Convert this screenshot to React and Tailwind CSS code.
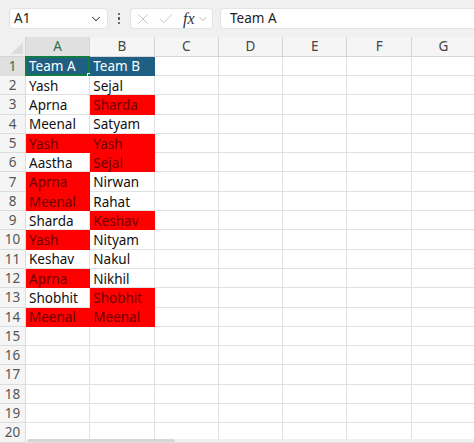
import React from 'react';
import { ChevronDown, X, Check } from 'lucide-react';

const rows = [
  [['Team A', 'h'], ['Team B', 'h']],
  [['Yash'], ['Sejal']],
  [['Aprna'], ['Sharda', 'r']],
  [['Meenal'], ['Satyam']],
  [['Yash', 'r'], ['Yash', 'r']],
  [['Aastha'], ['Sejal', 'r']],
  [['Aprna', 'r'], ['Nirwan']],
  [['Meenal', 'r'], ['Rahat']],
  [['Sharda'], ['Keshav', 'r']],
  [['Yash', 'r'], ['Nityam']],
  [['Keshav'], ['Nakul']],
  [['Aprna', 'r'], ['Nikhil']],
  [['Shobhit'], ['Shobhit', 'r']],
  [['Meenal', 'r'], ['Meenal', 'r']],
];

const cols = ['A', 'B', 'C', 'D', 'E', 'F', 'G'];

const Cell = ({ text, kind, selected }) => {
  let cls = 'border-r border-b border-[#e1e1e1] bg-white text-[#111]';
  if (kind === 'h') cls = 'border-r border-b border-[#1e5f83] bg-[#1e5f83] text-white';
  if (kind === 'r') cls = 'border-r border-b border-[#ff0000] bg-[#ff0000] text-[#6e0000]';
  return (
    <div className={`relative h-[19.3px] pl-[3px] flex items-end pb-[1px] text-[13.5px] leading-none whitespace-nowrap overflow-visible ${cls}`}>
      {text}
      {selected && (
        <div className="absolute -left-[1px] -top-[1px] -right-[1px] -bottom-[1px] border-2 border-[#107c41]">
          <div className="absolute -right-[4px] -bottom-[4px] w-[5px] h-[5px] bg-[#107c41] border border-white" />
        </div>
      )}
    </div>
  );
};

export default function App() {
  return (
    <div className="w-[474px] h-[443px] overflow-hidden relative bg-white" style={{ fontFamily: '"Noto Sans", sans-serif' }}>
      {/* formula bar */}
      <div className="h-[37px] bg-[#f0f0f0] flex items-center pl-[9px]">
        <div className="w-[99px] h-[21px] bg-white rounded-[4px] border border-[#e3e3e3] flex items-center justify-between pl-[4px] pr-[4px]">
          <span className="text-[13.5px] text-[#222]">A1</span>
          <ChevronDown size={14} strokeWidth={1.8} className="text-[#444]" />
        </div>
        <div className="w-[22px] flex flex-col items-center gap-[2px]">
          <div className="w-[2.5px] h-[2.5px] rounded-full bg-[#444]" />
          <div className="w-[2.5px] h-[2.5px] rounded-full bg-[#444]" />
          <div className="w-[2.5px] h-[2.5px] rounded-full bg-[#444]" />
        </div>
        <div className="w-[83px] h-[21px] bg-white rounded-[4px] border border-[#e3e3e3] flex items-center pl-[3px]">
          <X size={18} strokeWidth={1.1} className="text-[#bdbdbd]" />
          <Check size={18} strokeWidth={1.1} className="text-[#bdbdbd] ml-[5px]" />
          <span className="ml-[8px] text-[16px] italic text-[#333] leading-none" style={{ fontFamily: '"Liberation Serif", serif' }}>fx</span>
          <ChevronDown size={12} strokeWidth={1.5} className="text-[#999] ml-[2px]" />
        </div>
        <div className="ml-[7px] flex-1 h-[21px] bg-white rounded-l-[4px] border border-r-0 border-[#e3e3e3] flex items-center pl-[9px]">
          <span className="text-[13.5px] text-[#222]">Team A</span>
        </div>
      </div>

      {/* grid */}
      <div className="grid grid-cols-[26px_repeat(7,64.3px)]">
        <div className="relative h-[19.7px] bg-[#f0f0f0] border-r border-b border-[#d6d6d6]">
          <div className="absolute right-[2px] bottom-[2px] w-0 h-0 border-l-[12px] border-l-transparent border-b-[12px] border-b-[#dcdcdc]" />
        </div>
        {cols.map((c, i) => (
          <div
            key={c}
            className={`h-[19.7px] flex items-center justify-center text-[13.5px] border-r border-b border-[#d6d6d6] ${i === 0 ? 'bg-[#e0e0e0] text-[#2f6f4b]' : 'bg-[#f5f5f5] text-[#444]'}`}
          >
            {c}
          </div>
        ))}

        {Array.from({ length: 20 }).map((_, r) => (
          <React.Fragment key={r}>
            <div
              className={`h-[19.3px] flex items-center justify-center text-[13.5px] border-r border-b border-[#dcdcdc] ${r === 0 ? 'bg-[#e0e0e0] text-[#2f6f4b]' : 'bg-[#f5f5f5] text-[#555]'}`}
            >
              {r + 1}
            </div>
            {cols.map((c, ci) => {
              const d = rows[r] && ci < 2 ? rows[r][ci] : null;
              return (
                <Cell
                  key={c}
                  text={d ? d[0] : ''}
                  kind={d ? d[1] : undefined}
                  selected={r === 0 && ci === 0}
                />
              );
            })}
          </React.Fragment>
        ))}
      </div>

      {/* horizontal scrollbar */}
      <div className="absolute left-[27px] right-0 bottom-[1px] h-[3px] flex">
        <div className="w-[148px] h-full bg-[#d6d6d6] rounded-full" />
        <div className="flex-1 h-full bg-[#efefef]" />
      </div>
    </div>
  );
}
